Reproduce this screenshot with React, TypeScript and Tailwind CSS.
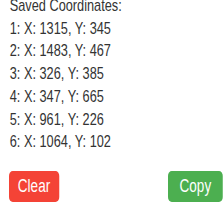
import React from "react";

const coords = [
  { x: 1315, y: 345 },
  { x: 1483, y: 467 },
  { x: 326, y: 385 },
  { x: 347, y: 665 },
  { x: 961, y: 226 },
  { x: 1064, y: 102 },
];

export default function App() {
  return (
    <div className="w-[224px] h-[224px] overflow-hidden bg-white">
      <div
        className="w-[298.67px] origin-top-left scale-x-[0.75] text-[#333333]"
        style={{ fontFamily: '"Liberation Sans", Arial, sans-serif' }}
      >
        <div className="-mt-[5px] pl-[13px] text-[17px] leading-[22.7px]">
          <div>Saved Coordinates:</div>
          {coords.map((c, i) => (
            <div key={i}>
              {i + 1}: X: {c.x}, Y: {c.y}
            </div>
          ))}
        </div>
        <div className="mt-[17px] flex justify-between pl-[12px] pr-[1.5px]">
          <button className="h-[31px] w-[66.7px] rounded-[5px] bg-[#f44336] text-[18px] text-white">
            Clear
          </button>
          <button className="h-[31px] w-[73.3px] rounded-[5px] bg-[#4caf50] text-[18px] text-white">
            Copy
          </button>
        </div>
      </div>
    </div>
  );
}
